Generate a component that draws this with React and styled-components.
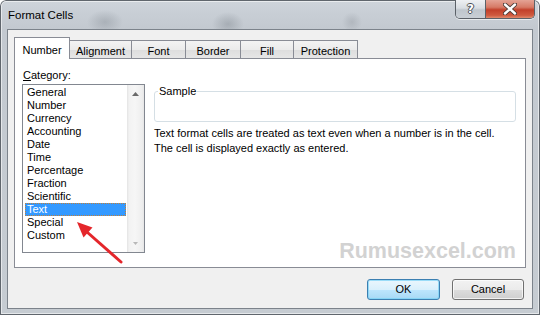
import React from "react";
import styled, { createGlobalStyle } from "styled-components";

const GlobalStyle = createGlobalStyle`
  html, body { margin: 0; padding: 0; width: 540px; height: 315px; overflow: hidden; background: #ffffff; }
  body { font-family: "Liberation Sans", Arial, sans-serif; }
  * { box-sizing: border-box; }
`;

const Window = styled.div`
  width: 540px;
  height: 315px;
  display: flex;
  flex-direction: column;
  border-radius: 6px 6px 0 0;
  background:
    radial-gradient(ellipse 18px 12px at 105px 22px, rgba(120,128,136,0.35), transparent),
    radial-gradient(ellipse 16px 12px at 228px 24px, rgba(110,118,126,0.35), transparent),
    radial-gradient(ellipse 10px 10px at 352px 22px, rgba(130,136,144,0.3), transparent),
    linear-gradient(180deg, #cfd5db 0px, #c8ced5 14px, #c3c9d0 29px, #c6ccd2 100%);
  box-shadow: inset 0 0 0 1px #60666d, inset 0 0 0 2px rgba(255,255,255,0.55);
  overflow: hidden;
`;

const TitleBar = styled.div`
  height: 29px;
  flex: none;
  display: flex;
  align-items: flex-start;
  padding-left: 8px;
`;

const Title = styled.div`
  font-size: 11.5px;
  line-height: 16px;
  padding-top: 7px;
  color: #000;
`;

const Caption = styled.div`
  margin-left: auto;
  margin-right: 5px;
  display: flex;
  height: 19px;
  border: 1px solid #5b6168;
  border-top: none;
  border-radius: 0 0 5px 5px;
  overflow: hidden;
  box-shadow: 0 1px 0 rgba(255,255,255,0.6);
`;

const CapButton = styled.div`
  width: ${p => p.$w}px;
  height: 100%;
  display: flex;
  align-items: center;
  justify-content: center;
  background: ${p => p.$close
    ? "linear-gradient(180deg, #e4a395 0%, #d67a66 40%, #c2402a 55%, #cf5a3f 85%, #e08a6c 100%)"
    : "linear-gradient(180deg, #eef0f3 0%, #d8dde2 45%, #bfc6cd 55%, #c9cfd5 100%)"};
  border-left: ${p => (p.$close ? "1px solid #5b6168" : "none")};
`;

const HelpGlyph = styled.span`
  font-family: "DejaVu Sans", sans-serif;
  font-weight: bold;
  font-size: 12px;
  line-height: 12px;
  color: #ffffff;
  text-shadow: 1px 0 0 #4a5058, -1px 0 0 #4a5058, 0 1px 0 #4a5058, 0 -1px 0 #4a5058;
`;

const Client = styled.div`
  flex: 1;
  margin: 0 7px 6px 7px;
  border: 1px solid #7c838b;
  background: #f0f0f0;
  padding: 7px 6px 8px 6px;
  display: flex;
  flex-direction: column;
`;

const TabRow = styled.div`
  display: flex;
  align-items: flex-end;
  height: 21px;
  position: relative;
  z-index: 1;
`;

const Tab = styled.div`
  width: ${p => p.$w}px;
  height: ${p => (p.$active ? 22 : 18)}px;
  margin-bottom: ${p => (p.$active ? -1 : 0)}px;
  margin-left: ${p => (p.$first ? 0 : -1)}px;
  border: 1px solid #898c95;
  border-bottom: none;
  background: ${p => (p.$active ? "#ffffff" : "linear-gradient(180deg, #f3f3f3 0%, #ebebeb 50%, #dddddd 51%, #e6e6e6 100%)")};
  position: relative;
  z-index: ${p => (p.$active ? 2 : 1)};
  font-size: 11px;
  line-height: 14px;
  color: #000;
  display: flex;
  justify-content: center;
  padding-top: ${p => (p.$active ? 5 : 3)}px;
`;

const Panel = styled.div`
  height: 210px;
  border: 1px solid #898c95;
  background: #ffffff;
  display: flex;
  padding: 10px 9px 0 7px;
  position: relative;
`;

const LeftCol = styled.div`
  display: flex;
  flex-direction: column;
  width: 123px;
`;

const Label = styled.div`
  font-size: 11px;
  line-height: 13px;
  height: 15px;
  padding-left: 1px;
  color: #000;
  u { text-decoration: underline; }
`;

const ListBox = styled.div`
  height: 169px;
  border: 1px solid #828790;
  background: #ffffff;
  display: flex;
`;

const Items = styled.div`
  flex: 1;
  padding-top: 1px;
`;

const Item = styled.div`
  height: 13px;
  margin: 0 1px 0 2px;
  padding-left: 2px;
  font-size: 11px;
  line-height: 13px;
  color: ${p => (p.$selected ? "#ffffff" : "#000000")};
  background: ${p => (p.$selected ? "#3399ff" : "transparent")};
  outline: ${p => (p.$selected ? "1px dotted #c0803a" : "none")};
  outline-offset: -1px;
`;

const ScrollBar = styled.div`
  width: 17px;
  display: flex;
  flex-direction: column;
  justify-content: space-between;
  background: linear-gradient(90deg, #e3e3e3 0px, #f2f2f2 2px, #f6f6f6 8px, #eeeeee 15px, #e6e6e6 17px);
`;

const ArrowBtn = styled.div`
  height: 17px;
  display: flex;
  align-items: center;
  justify-content: center;
`;

const RightCol = styled.div`
  flex: 1;
  margin-left: 9px;
  display: flex;
  flex-direction: column;
`;

const Group = styled.fieldset`
  margin: 16px 0 0 0;
  padding: 0;
  border: 1px solid #d5dfe5;
  border-radius: 3px;
  min-width: 0;
`;

const Legend = styled.legend`
  padding: 0 1px;
  margin-left: 3px;
  font-size: 11px;
  line-height: 13px;
  color: #000;
`;

const GroupBody = styled.div`
  height: 23px;
`;

const Desc = styled.div`
  margin-top: 4px;
  font-size: 11px;
  line-height: 15px;
  color: #000;
`;

const Watermark = styled.div`
  margin-top: auto;
  margin-bottom: 1px;
  align-self: flex-end;
  font-size: 21.5px;
  font-weight: bold;
  line-height: 26px;
  color: #d2d2d2;
  margin-right: 0;
  padding-bottom: 0;
  transform: translateY(-2px);
`;

const Annotation = styled.svg`
  position: absolute;
  left: 50px;
  top: 155px;
  overflow: visible;
`;

const ButtonRow = styled.div`
  display: flex;
  justify-content: flex-end;
  gap: 12px;
  margin-top: 11px;
  margin-right: 2px;
`;

const Button = styled.div`
  width: ${p => p.$w}px;
  height: 21px;
  border-radius: 3px;
  border: 1px solid ${p => (p.$default ? "#3c7fb1" : "#707070")};
  background: ${p => p.$default
    ? "linear-gradient(180deg, #eaf6fd 0%, #d9f0fc 50%, #bee6fd 51%, #a7d9f5 100%)"
    : "linear-gradient(180deg, #f2f2f2 0%, #ebebeb 50%, #dddddd 51%, #cfcfcf 100%)"};
  box-shadow: inset 0 0 0 1px ${p => (p.$default ? "rgba(120,210,245,0.7)" : "rgba(255,255,255,0.7)")};
  font-size: 11px;
  line-height: 19px;
  text-align: center;
  color: #000;
`;

const tabs = [
  { label: "Number", w: 56, active: true },
  { label: "Alignment", w: 63 },
  { label: "Font", w: 55 },
  { label: "Border", w: 56 },
  { label: "Fill", w: 54 },
  { label: "Protection", w: 65 },
];

const categories = [
  "General", "Number", "Currency", "Accounting", "Date", "Time",
  "Percentage", "Fraction", "Scientific", "Text", "Special", "Custom",
];

export default function App() {
  return (
    <>
      <GlobalStyle />
      <Window>
        <TitleBar>
          <Title>Format Cells</Title>
          <Caption>
            <CapButton $w={29}><HelpGlyph>?</HelpGlyph></CapButton>
            <CapButton $w={49} $close>
              <svg width="14" height="12" viewBox="0 0 14 12">
                <path d="M2 1.5 L12 10.5 M12 1.5 L2 10.5" stroke="#4a3a36" strokeWidth="4.2" strokeLinecap="round" />
                <path d="M2 1.5 L12 10.5 M12 1.5 L2 10.5" stroke="#ffffff" strokeWidth="2.4" strokeLinecap="round" />
              </svg>
            </CapButton>
          </Caption>
        </TitleBar>
        <Client>
          <TabRow>
            {tabs.map((t, i) => (
              <Tab key={t.label} $w={t.w} $active={t.active} $first={i === 0}>{t.label}</Tab>
            ))}
          </TabRow>
          <Panel>
            <LeftCol>
              <Label><u>C</u>ategory:</Label>
              <ListBox>
                <Items>
                  {categories.map(c => (
                    <Item key={c} $selected={c === "Text"}>{c}</Item>
                  ))}
                </Items>
                <ScrollBar>
                  <ArrowBtn>
                    <svg width="7" height="4" viewBox="0 0 7 4"><path d="M3.5 0 L7 4 L0 4 Z" fill="#6a6a6a" /></svg>
                  </ArrowBtn>
                  <ArrowBtn>
                    <svg width="5" height="3" viewBox="0 0 5 3"><path d="M0 0 L5 0 L2.5 3 Z" fill="#b8b8b8" /></svg>
                  </ArrowBtn>
                </ScrollBar>
              </ListBox>
            </LeftCol>
            <RightCol>
              <Group>
                <Legend>Sample</Legend>
                <GroupBody />
              </Group>
              <Desc>
                Text format cells are treated as text even when a number is in the cell.<br />
                The cell is displayed exactly as entered.
              </Desc>
              <Watermark>Rumusexcel.com</Watermark>
            </RightCol>
            <Annotation width="70" height="55" viewBox="0 0 70 55">
              <path d="M22 18 L56 48" stroke="#e4262b" strokeWidth="3" strokeLinecap="round" />
              <path d="M12 8 L27.5 13.5 L18.5 23.5 Z" fill="#e4262b" />
            </Annotation>
          </Panel>
          <ButtonRow>
            <Button $w={73} $default>OK</Button>
            <Button $w={72}>Cancel</Button>
          </ButtonRow>
        </Client>
      </Window>
    </>
  );
}
